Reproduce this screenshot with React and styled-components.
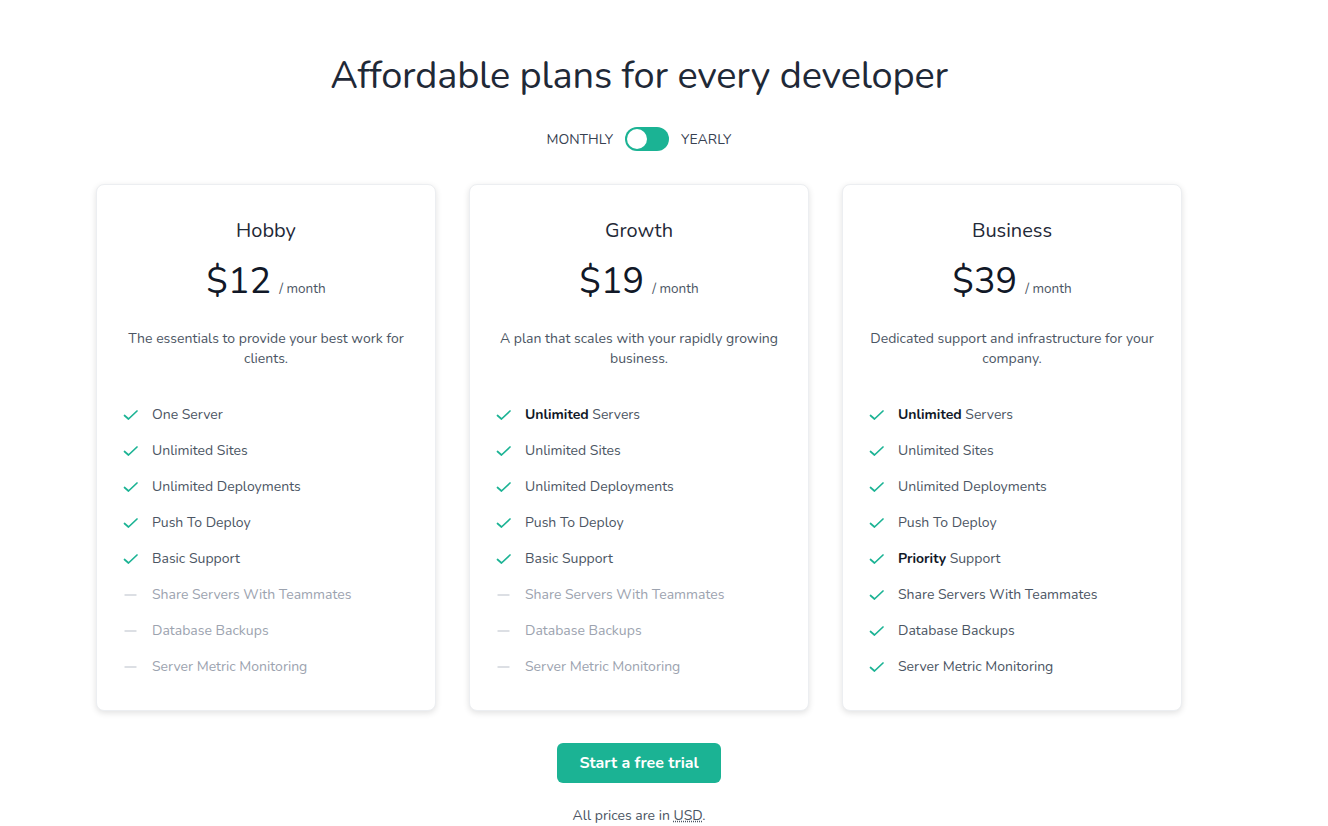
import React from "react";
import styled, { createGlobalStyle } from "styled-components";

const Global = createGlobalStyle`
  html, body { margin: 0; padding: 0; background: #fff; }
  body { font-family: "Nunito", "Lato", sans-serif; color: #1f2937; }
  * { box-sizing: border-box; }
`;

const Page = styled.div`
  width: 1086px;
  margin-left: 96px;
  padding-top: 52px;
  display: flex;
  flex-direction: column;
  align-items: center;
`;

const Title = styled.h1`
  margin: 0;
  font-weight: 400;
  font-size: 38px;
  line-height: 48px;
  color: #1f2937;
  letter-spacing: -0.2px;
`;

const ToggleRow = styled.div`
  margin-top: 27px;
  display: flex;
  align-items: center;
  gap: 12px;
  font-size: 14px;
  color: #374151;
`;

const Track = styled.div`
  width: 44px;
  height: 24px;
  border-radius: 12px;
  background: #1bb394;
  padding: 2px;
  display: flex;
  justify-content: ${(p) => (p.$on ? "flex-end" : "flex-start")};
`;

const Knob = styled.div`
  width: 20px;
  height: 20px;
  border-radius: 50%;
  background: #fff;
`;

const Cards = styled.div`
  margin-top: 33px;
  width: 100%;
  display: grid;
  grid-template-columns: repeat(3, 340px);
  column-gap: 33px;
`;

const Card = styled.div`
  border: 1px solid #eceef1;
  border-radius: 8px;
  background: #fff;
  box-shadow: 0 2px 6px rgba(0, 0, 0, 0.12);
  padding: 33px 26px 33px;
  display: flex;
  flex-direction: column;
  align-items: center;
`;

const PlanName = styled.h2`
  margin: 0;
  font-size: 20px;
  line-height: 26px;
  font-weight: 400;
  color: #1f2937;
`;

const PriceRow = styled.div`
  margin-top: 14px;
  display: flex;
  align-items: baseline;
  gap: 8px;
`;

const Price = styled.span`
  font-size: 36px;
  line-height: 48px;
  color: #111827;
`;

const Per = styled.span`
  font-size: 13.5px;
  color: #4b5563;
`;

const Desc = styled.p`
  margin: 23px 0 0;
  text-align: center;
  font-size: 14px;
  line-height: 20px;
  color: #4b5563;
`;

const Features = styled.ul`
  list-style: none;
  margin: 36px 0 0;
  padding: 0;
  align-self: stretch;
  display: flex;
  flex-direction: column;
  gap: 16px;
`;

const Feature = styled.li`
  display: flex;
  align-items: center;
  gap: 13px;
  font-size: 14px;
  line-height: 20px;
  color: ${(p) => (p.$off ? "#9ca3af" : "#4b5563")};
  b { color: #111827; font-weight: 700; }
`;

const IconBox = styled.span`
  width: 16px;
  height: 16px;
  display: flex;
  align-items: center;
  justify-content: center;
  flex: none;
`;

const Button = styled.button`
  margin-top: 32px;
  height: 40px;
  padding: 0 22px;
  border: none;
  border-radius: 6px;
  background: #1bb394;
  color: #fff;
  font-family: inherit;
  font-weight: 700;
  font-size: 16px;
  cursor: pointer;
`;

const Note = styled.p`
  margin: 23px 0 0;
  font-size: 14px;
  color: #4b5563;
  abbr { text-decoration: underline dotted; }
`;

const Check = () => (
  <svg width="16" height="16" viewBox="0 0 16 16" fill="none">
    <path d="M1.5 8.5l4 3.5 8.5-8" stroke="#1bb394" strokeWidth="1.7" strokeLinecap="round" strokeLinejoin="round" />
  </svg>
);

const Dash = () => (
  <svg width="16" height="16" viewBox="0 0 16 16" fill="none">
    <path d="M2 8h11" stroke="#d1d5db" strokeWidth="1.4" strokeLinecap="round" />
  </svg>
);

const plans = [
  {
    name: "Hobby",
    price: "$12",
    desc: "The essentials to provide your best work for clients.",
    features: [
      ["", "One Server"],
      ["", "Unlimited Sites"],
      ["", "Unlimited Deployments"],
      ["", "Push To Deploy"],
      ["", "Basic Support"],
      ["", "Share Servers With Teammates", true],
      ["", "Database Backups", true],
      ["", "Server Metric Monitoring", true],
    ],
  },
  {
    name: "Growth",
    price: "$19",
    desc: "A plan that scales with your rapidly growing business.",
    features: [
      ["Unlimited", " Servers"],
      ["", "Unlimited Sites"],
      ["", "Unlimited Deployments"],
      ["", "Push To Deploy"],
      ["", "Basic Support"],
      ["", "Share Servers With Teammates", true],
      ["", "Database Backups", true],
      ["", "Server Metric Monitoring", true],
    ],
  },
  {
    name: "Business",
    price: "$39",
    desc: "Dedicated support and infrastructure for your company.",
    features: [
      ["Unlimited", " Servers"],
      ["", "Unlimited Sites"],
      ["", "Unlimited Deployments"],
      ["", "Push To Deploy"],
      ["Priority", " Support"],
      ["", "Share Servers With Teammates"],
      ["", "Database Backups"],
      ["", "Server Metric Monitoring"],
    ],
  },
];

export default function App() {
  return (
    <>
      <Global />
      <Page>
        <Title>Affordable plans for every developer</Title>
        <ToggleRow>
          <span>MONTHLY</span>
          <Track>
            <Knob />
          </Track>
          <span>YEARLY</span>
        </ToggleRow>
        <Cards>
          {plans.map((p) => (
            <Card key={p.name}>
              <PlanName>{p.name}</PlanName>
              <PriceRow>
                <Price>{p.price}</Price>
                <Per>/ month</Per>
              </PriceRow>
              <Desc>{p.desc}</Desc>
              <Features>
                {p.features.map(([bold, rest, off]) => (
                  <Feature key={bold + rest} $off={off}>
                    <IconBox>{off ? <Dash /> : <Check />}</IconBox>
                    <span>
                      {bold && <b>{bold}</b>}
                      {rest}
                    </span>
                  </Feature>
                ))}
              </Features>
            </Card>
          ))}
        </Cards>
        <Button>Start a free trial</Button>
        <Note>
          All prices are in <abbr title="United States Dollars">USD</abbr>.
        </Note>
      </Page>
    </>
  );
}
